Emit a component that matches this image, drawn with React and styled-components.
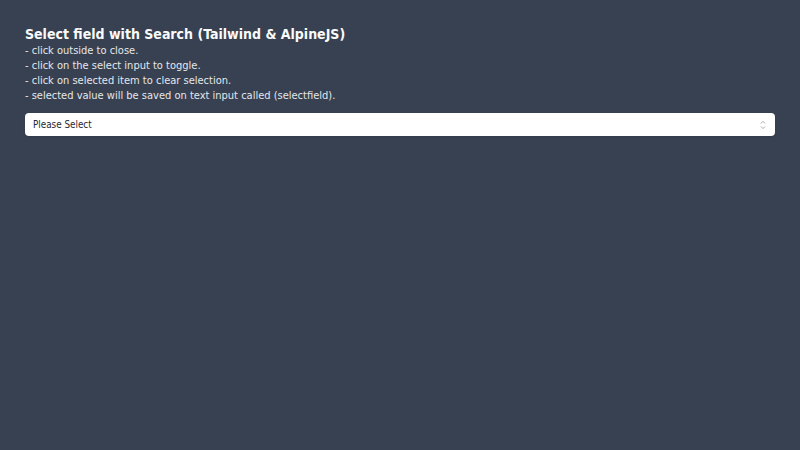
import styled, { createGlobalStyle } from "styled-components";

const GlobalStyle = createGlobalStyle`
  html, body {
    margin: 0;
    padding: 0;
    background: #374151;
  }
  body {
    font-family: "DejaVu Sans Condensed", "DejaVu Sans", sans-serif;
  }
`;

const Page = styled.div`
  min-height: 450px;
  box-sizing: border-box;
  padding: 25px 25px;
  background: #374151;
  color: #f3f4f6;
`;

const Title = styled.h1`
  margin: 0;
  font-size: 14px;
  line-height: 18px;
  font-weight: bold;
  color: #f9fafb;
`;

const Note = styled.p`
  margin: 0;
  font-size: 11px;
  line-height: 15px;
  color: #e5e7eb;
`;

const SelectBox = styled.div`
  margin-top: 10px;
  height: 23px;
  display: flex;
  align-items: center;
  justify-content: space-between;
  padding: 0 6px 0 8px;
  background: #ffffff;
  border-radius: 4px;
  box-shadow: 0 1px 2px rgba(0, 0, 0, 0.1);
  cursor: pointer;
`;

const Placeholder = styled.span`
  font-size: 9.8px;
  color: #1f2937;
`;

const Chevrons = styled.svg`
  width: 12px;
  height: 12px;
  color: #9ca3af;
`;

export default function App() {
  return (
    <>
      <GlobalStyle />
      <Page>
        <Title>Select field with Search (Tailwind &amp; AlpineJS)</Title>
        <Note>- click outside to close.</Note>
        <Note>- click on the select input to toggle.</Note>
        <Note>- click on selected item to clear selection.</Note>
        <Note>- selected value will be saved on text input called (selectfield).</Note>
        <SelectBox>
          <Placeholder>Please Select</Placeholder>
          <Chevrons viewBox="0 0 20 20" fill="none" stroke="currentColor" strokeWidth="1.5">
            <path d="M7 7l3-3 3 3M7 13l3 3 3-3" strokeLinecap="round" strokeLinejoin="round" />
          </Chevrons>
        </SelectBox>
      </Page>
    </>
  );
}
